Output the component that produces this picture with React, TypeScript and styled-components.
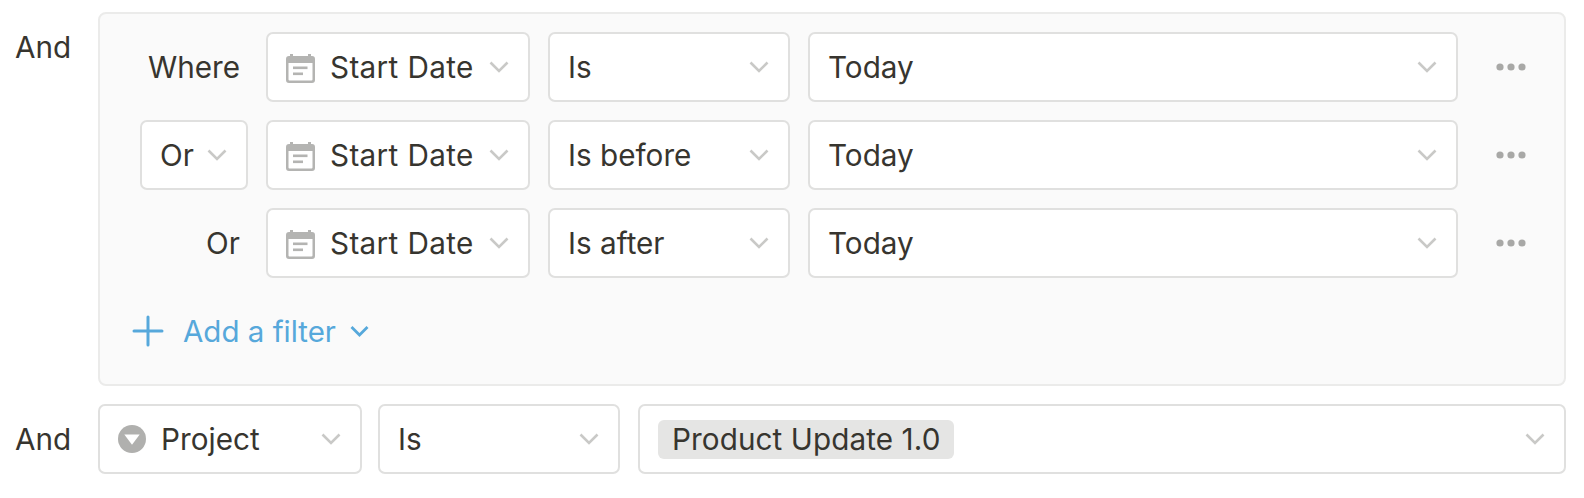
import React from "react";
import styled, { createGlobalStyle } from "styled-components";

const Global = createGlobalStyle`
  html, body { margin: 0; padding: 0; background: #fff; }
  body { font-family: Inter, "Liberation Sans", sans-serif; color: #37352f; }
`;

const Page = styled.div`
  width: 1584px;
  height: 498px;
  box-sizing: border-box;
  padding: 12px 18px 0 0;
  display: flex;
  flex-direction: column;
  gap: 18px;
  overflow: hidden;
`;

const Group = styled.div<{ $top?: boolean }>`
  display: flex;
  align-items: ${(p) => (p.$top ? "flex-start" : "center")};
`;

const Conjunction = styled.div<{ $top?: boolean }>`
  width: 98px;
  flex: none;
  box-sizing: border-box;
  padding-left: 15px;
  font-size: 29.7px;
  line-height: 36px;
  ${(p) => (p.$top ? "padding-top: 17px;" : "")}
`;

const Panel = styled.div`
  flex: 1;
  height: 374px;
  box-sizing: border-box;
  background: #fafafa;
  border: 2px solid #ebebea;
  border-radius: 8px;
  padding: 18px 0 0 40px;
  display: flex;
  flex-direction: column;
  gap: 18px;
`;

const FilterRow = styled.div<{ $fill?: boolean }>`
  display: flex;
  align-items: center;
  gap: 18px;
  ${(p) => (p.$fill ? "flex: 1;" : "")}
`;

const RowLabel = styled.div`
  width: 108px;
  flex: none;
  box-sizing: border-box;
  padding-right: 8px;
  text-align: right;
  font-size: 29.7px;
`;

const Select = styled.div<{ $width?: number; $gap?: number; $pull?: number }>`
  ${(p) => (p.$width ? `width: ${p.$width}px; flex: none;` : "flex: 1; min-width: 0;")}
  ${(p) => (p.$pull ? `margin-left: -${p.$pull}px;` : "")}
  height: 70px;
  box-sizing: border-box;
  background: #fff;
  border: 2px solid #e0e0df;
  border-radius: 7px;
  padding: 0 19px 0 18px;
  display: flex;
  align-items: center;
  gap: ${(p) => p.$gap ?? 0}px;
  font-size: 29.7px;
`;

const SelectText = styled.span<{ $spaced?: boolean }>`
  flex: 1;
  white-space: nowrap;
  ${(p) => (p.$spaced ? "letter-spacing: 0.35px;" : "")}
`;

const Chevron = styled.svg`
  width: 20px;
  height: 12px;
  flex: none;
  fill: none;
  stroke: #c9c9c7;
  stroke-width: 2.6;
`;

const CalendarGlyph = styled.svg`
  width: 31px;
  height: 31px;
  flex: none;
  margin: 0 14px 0 -1px;
`;

const SelectGlyph = styled.svg`
  width: 28px;
  height: 28px;
  flex: none;
  margin-right: 15px;
`;

const Dots = styled.svg`
  width: 32px;
  height: 10px;
  flex: none;
  margin-left: 19px;
  fill: #a8a8a6;
`;

const AddRow = styled.div`
  display: flex;
  align-items: center;
  margin: 17px 0 0 -8px;
  color: #56a8db;
  font-size: 29.5px;
  height: 36px;
`;

const Plus = styled.svg`
  width: 32px;
  height: 32px;
  flex: none;
  margin-right: 19px;
  fill: none;
  stroke: #56a8db;
  stroke-width: 3;
  stroke-linecap: round;
`;

const AddChevron = styled.svg`
  width: 19px;
  height: 12px;
  margin-left: 14px;
  fill: none;
  stroke: #56a8db;
  stroke-width: 2.8;
`;

const Tag = styled.span`
  background: #e5e5e4;
  border-radius: 6px;
  height: 39px;
  padding: 0 14px;
  display: inline-flex;
  align-items: center;
  white-space: nowrap;
  letter-spacing: 0.08px;
`;

const ChevronIcon = () => (
  <Chevron viewBox="0 0 20 12">
    <path d="M1.5 1.5 10 10l8.5-8.5" />
  </Chevron>
);

const CalendarIcon = () => (
  <CalendarGlyph viewBox="0 0 31 31">
    <path
      fill="#b4b4b2"
      d="M5 2h3v2h15V2h3v2h1a3 3 0 0 1 3 3v21a3 3 0 0 1-3 3H4a3 3 0 0 1-3-3V7a3 3 0 0 1 3-3h1V2ZM3.5 11v16.5a1 1 0 0 0 1 1h22a1 1 0 0 0 1-1V11h-24Z"
    />
    <rect x="8" y="14.5" width="14.5" height="2.6" fill="#b4b4b2" />
    <rect x="8" y="20.5" width="10" height="2.6" fill="#b4b4b2" />
  </CalendarGlyph>
);

const SelectIcon = () => (
  <SelectGlyph viewBox="0 0 31 31">
    <circle cx="15.5" cy="15.5" r="15.5" fill="#b0b0ae" />
    <path d="M7 10.5h17L15.5 22 7 10.5Z" fill="#fff" />
  </SelectGlyph>
);

const rows = [
  { label: "Where", cond: "Is" },
  { label: "Or", cond: "Is before", select: true },
  { label: "Or", cond: "Is after" },
];

export default function App() {
  return (
    <Page>
      <Global />
      <Group $top>
        <Conjunction $top>And</Conjunction>
        <Panel>
          {rows.map((r, i) => (
            <FilterRow key={i}>
              {r.select ? (
                <Select $width={108} $gap={8}>
                  <SelectText>{r.label}</SelectText>
                  <ChevronIcon />
                </Select>
              ) : (
                <RowLabel>{r.label}</RowLabel>
              )}
              <Select $width={264}>
                <CalendarIcon />
                <SelectText $spaced>Start Date</SelectText>
                <ChevronIcon />
              </Select>
              <Select $width={242}>
                <SelectText>{r.cond}</SelectText>
                <ChevronIcon />
              </Select>
              <Select $width={650}>
                <SelectText>Today</SelectText>
                <ChevronIcon />
              </Select>
              <Dots viewBox="0 0 32 10">
                <circle cx="5" cy="5" r="3.6" />
                <circle cx="16" cy="5" r="3.6" />
                <circle cx="27" cy="5" r="3.6" />
              </Dots>
            </FilterRow>
          ))}
          <AddRow>
            <Plus viewBox="0 0 32 32">
              <path d="M16 2v28M2 16h28" />
            </Plus>
            Add a filter
            <AddChevron viewBox="0 0 19 12">
              <path d="M1.5 2 9.5 10l8-8" />
            </AddChevron>
          </AddRow>
        </Panel>
      </Group>
      <Group>
        <Conjunction>And</Conjunction>
        <FilterRow $fill>
          <Select $width={264}>
            <SelectIcon />
            <SelectText>Project</SelectText>
            <ChevronIcon />
          </Select>
          <Select $width={242} $pull={2}>
            <SelectText>Is</SelectText>
            <ChevronIcon />
          </Select>
          <Select>
            <SelectText>
              <Tag>Product Update 1.0</Tag>
            </SelectText>
            <ChevronIcon />
          </Select>
        </FilterRow>
      </Group>
    </Page>
  );
}
